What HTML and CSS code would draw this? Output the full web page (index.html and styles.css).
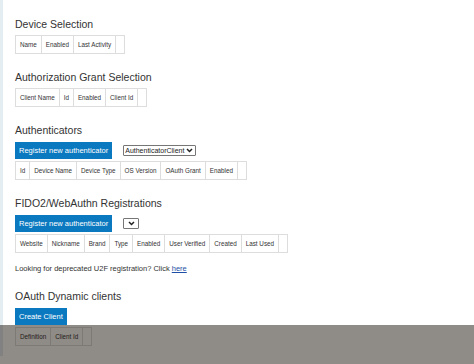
FILE: index.html
```html
<!DOCTYPE html>
<html lang="en">
<head>
    <meta charset="UTF-8" />
    <title>Account devices</title>
    <link rel="stylesheet" href="styles.css">
</head>
<body>
    <div class="page">
        <!-- Device Selection -->
        <h2 class="section-title">Device Selection</h2>
        <table class="grid">
            <thead>
                <tr><th>Name</th><th>Enabled</th><th>Last Activity</th><th></th></tr>
            </thead>
        </table>

        <!-- Authorization Grants -->
        <h2 class="section-title">Authorization Grant Selection</h2>
        <table class="grid">
            <thead>
                <tr><th>Client Name</th><th>Id</th><th>Enabled</th><th>Client Id</th><th></th></tr>
            </thead>
        </table>

        <!-- Authenticators -->
        <h2 class="section-title">Authenticators</h2>
        <div class="toolbar">
            <button class="btn-blue">Register new authenticator</button>
            <label class="picker">
                <select><option>AuthenticatorClient</option></select>
                <svg width="7" height="5" viewBox="0 0 7 5"><path d="M1 1 L3.5 3.5 L6 1" fill="none" stroke="#222" stroke-width="1.5"/></svg>
            </label>
        </div>
        <table class="grid">
            <thead>
                <tr><th>Id</th><th>Device Name</th><th>Device Type</th><th>OS Version</th><th>OAuth Grant</th><th>Enabled</th><th></th></tr>
            </thead>
        </table>

        <!-- FIDO2 -->
        <h2 class="section-title">FIDO2/WebAuthn Registrations</h2>
        <div class="toolbar">
            <button class="btn-blue">Register new authenticator</button>
            <label class="picker picker-empty">
                <select></select>
                <svg width="7" height="5" viewBox="0 0 7 5"><path d="M1 1 L3.5 3.5 L6 1" fill="none" stroke="#222" stroke-width="1.5"/></svg>
            </label>
        </div>
        <table class="grid">
            <thead>
                <tr><th>Website</th><th>Nickname</th><th>Brand</th><th>Type</th><th>Enabled</th><th>User Verified</th><th>Created</th><th>Last Used</th><th></th></tr>
            </thead>
        </table>
        <p class="note">Looking for deprecated U2F registration? Click <a href="#">here</a></p>

        <!-- OAuth clients -->
        <h2 class="section-title">OAuth Dynamic clients</h2>
        <div class="toolbar">
            <button class="btn-blue">Create Client</button>
        </div>
        <table class="grid">
            <thead>
                <tr><th>Definition</th><th>Client Id</th><th></th></tr>
            </thead>
        </table>
    </div>

    <!-- backdrop of the dialog -->
    <div class="backdrop"></div>
</body>
</html>
```

FILE: styles.css
```css
/* Basic Styling */
body {
    margin: 0;
    background-color: #ffffff;
    color: #333333;
    font-family: "Liberation Sans", Arial, sans-serif;
}

.page {
    border-left: 3px solid #e3edf2;
    padding: 18px 12px 10px 12px;
}

.section-title {
    font-size: 10.5px;
    font-weight: normal;
    line-height: 12px;
    margin: 17px 0 5px 0;
    color: #333333;
}
.section-title:first-child { margin-top: 0; }

/* Tables (header only) */
.grid {
    border-collapse: collapse;
    font-size: 6.3px;
}
.grid th {
    font-weight: normal;
    text-align: left;
    line-height: 8px;
    padding: 4.5px 4px;
    border: 1px solid #dddddd;
    color: #333333;
}

/* Button row */
.toolbar {
    display: flex;
    align-items: center;
    gap: 11px;
    padding-top: 1px;
    margin-bottom: 2px;
}

.btn-blue {
    background-color: #0b79c0;
    color: #ffffff;
    border: none;
    font-family: "Liberation Sans", Arial, sans-serif;
    font-size: 7.5px;
    line-height: 9px;
    padding: 4px 4px;
    margin: 0;
}

.picker {
    display: inline-flex;
    align-items: center;
    gap: 1px;
    border: 1px solid #767676;
    border-radius: 1px;
    height: 9px;
    padding: 0 2px 0 1px;
    background-color: #ffffff;
}
.picker select {
    appearance: none;
    -webkit-appearance: none;
    border: none;
    background: transparent;
    font-family: "Liberation Sans", Arial, sans-serif;
    font-size: 7px;
    line-height: 9px;
    padding: 0;
    margin: 0;
    color: #222222;
}
.picker-empty { padding: 0 3px; }
.picker-empty select { width: 0; }

.note {
    font-size: 7.5px;
    line-height: 9px;
    margin: 11px 0 0 0;
}
.note a { color: #1d4fa6; }
.note + .section-title { margin-top: 17px; }

/* Dialog backdrop over the bottom */
.backdrop {
    position: fixed;
    left: 0;
    right: 0;
    top: 325px;
    bottom: 0;
    background-color: rgba(17, 8, 0, 0.47);
}
```
